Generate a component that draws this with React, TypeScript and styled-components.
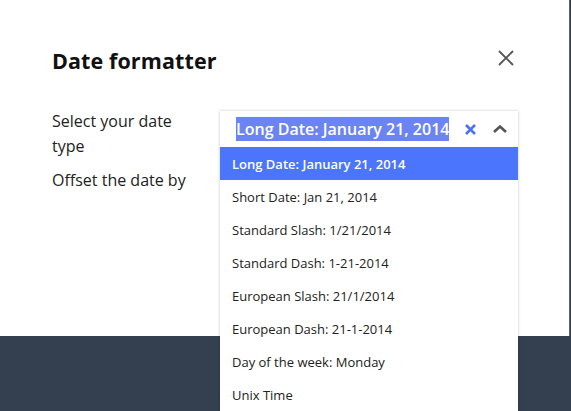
import React, { useState } from "react";
import styled, { createGlobalStyle } from "styled-components";

const GlobalStyle = createGlobalStyle`
  html, body {
    margin: 0;
    padding: 0;
    height: 100%;
    background: #343f50;
    font-family: "Open Sans", "Noto Sans", sans-serif;
    overflow: hidden;
  }
`;

const options = [
  "Long Date: January 21, 2014",
  "Short Date: Jan 21, 2014",
  "Standard Slash: 1/21/2014",
  "Standard Dash: 1-21-2014",
  "European Slash: 21/1/2014",
  "European Dash: 21-1-2014",
  "Day of the week: Monday",
  "Unix Time",
];

const Backdrop = styled.div`
  width: 571px;
  height: 411px;
  background: linear-gradient(to bottom, #2c3544 0px, #343f50 18px, #343f50 100%);
`;

const Modal = styled.div`
  width: 570px;
  height: 336px;
  background: #ffffff;
  box-sizing: border-box;
  border-right: 1px solid #5b6270;
  padding: 44px 52px 0 52px;
`;

const Header = styled.div`
  display: flex;
  align-items: center;
  justify-content: space-between;
  height: 32px;
`;

const Title = styled.h2`
  margin: 0;
  font-size: 21.5px;
  font-weight: 700;
  color: #111;
  letter-spacing: 0.1px;
`;

const CloseButton = styled.button`
  border: none;
  background: none;
  padding: 0;
  margin: -4px 3px 0 0;
  width: 16px;
  height: 16px;
  display: flex;
  align-items: center;
  justify-content: center;
  cursor: pointer;
`;

const Form = styled.div`
  display: grid;
  grid-template-columns: 168px 298px;
  margin-top: 33px;
  row-gap: 9px;
`;

const Label = styled.div`
  font-size: 16px;
  line-height: 25px;
  color: #222;
  width: 140px;
`;

const Field = styled.div`
  position: relative;
  height: 0;
`;

const Select = styled.div`
  position: absolute;
  top: 2px;
  left: 0;
  width: 298px;
  background: #fff;
  box-shadow: 0 0 3px rgba(0, 0, 0, 0.22);
  z-index: 2;
`;

const Control = styled.div`
  height: 36px;
  display: flex;
  align-items: center;
  padding: 0 6px 0 16px;
`;

const Value = styled.div`
  flex: 1;
  min-width: 0;
  white-space: nowrap;
  font-size: 16px;
  font-weight: 600;
  color: #fff;
`;

const Highlight = styled.span`
  background: #6c84f3;
  padding: 1px 0;
`;

const IconButton = styled.span<{ $gap: number }>`
  display: flex;
  align-items: center;
  justify-content: center;
  width: 24px;
  height: 24px;
  margin-left: ${(p) => p.$gap}px;
`;

const Menu = styled.ul`
  list-style: none;
  margin: 0;
  padding: 0;
`;

const Option = styled.li<{ $active?: boolean }>`
  height: 33px;
  display: flex;
  align-items: center;
  padding: 0 12px;
  font-size: 13px;
  font-weight: ${(p) => (p.$active ? 600 : 400)};
  color: ${(p) => (p.$active ? "#fff" : "#222")};
  background: ${(p) => (p.$active ? "#4a75fc" : "#fff")};
`;

const App: React.FC = () => {
  const [selected] = useState(0);
  return (
    <>
      <GlobalStyle />
      <Backdrop>
        <Modal>
          <Header>
            <Title>Date formatter</Title>
            <CloseButton aria-label="Close">
              <svg width="16" height="16" viewBox="0 0 16 16">
                <path d="M1 1 L15 15 M15 1 L1 15" stroke="#555" strokeWidth="1.8" fill="none" />
              </svg>
            </CloseButton>
          </Header>
          <Form>
            <Label>Select your date type</Label>
            <Field>
              <Select>
                <Control>
                  <Value>
                    <Highlight>{options[selected]}</Highlight>
                  </Value>
                  <IconButton $gap={4}>
                    <svg width="13" height="13" viewBox="0 0 13 13">
                      <path d="M2 2 L11 11 M11 2 L2 11" stroke="#4a72f5" strokeWidth="2.6" fill="none" />
                    </svg>
                  </IconButton>
                  <IconButton $gap={6}>
                    <svg width="16" height="10" viewBox="0 0 16 10">
                      <path d="M2 8 L8 2.5 L14 8" stroke="#555" strokeWidth="2.6" fill="none" />
                    </svg>
                  </IconButton>
                </Control>
                <Menu>
                  {options.map((o, i) => (
                    <Option key={o} $active={i === selected}>
                      {o}
                    </Option>
                  ))}
                </Menu>
              </Select>
            </Field>
            <Label>Offset the date by</Label>
            <div />
          </Form>
        </Modal>
      </Backdrop>
    </>
  );
};

export default App;
